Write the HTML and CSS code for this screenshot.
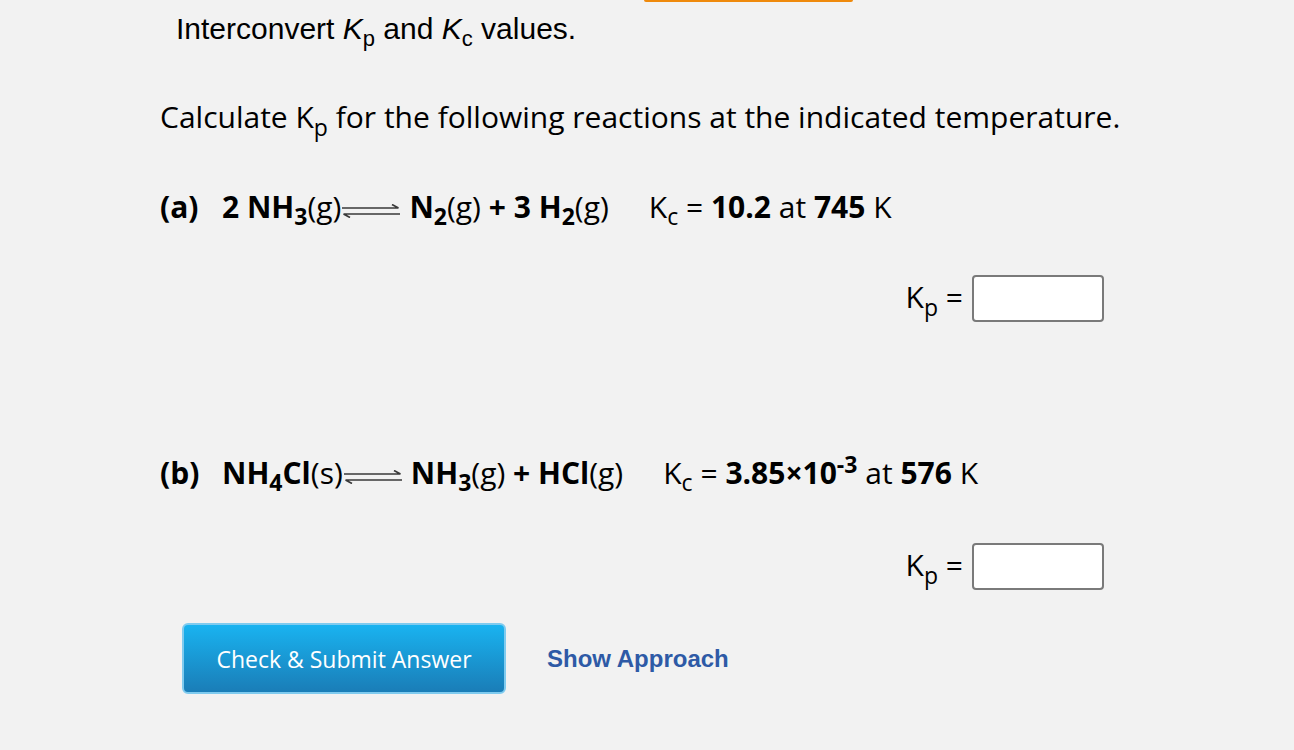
FILE: index.html
```html
<!DOCTYPE html>
<html>
<head>
<meta charset="utf-8">
<link rel="stylesheet" href="styles.css">
</head>
<body>
<div class="topbar"></div>
<div class="page">
  <h1 class="title">Interconvert <i>K</i><sub>p</sub> and <i>K</i><sub>c</sub> values.</h1>
  <p class="prompt">Calculate K<sub>p</sub> for the following reactions at the indicated temperature.</p>

  <div class="eq eqa">
    <span class="lbl">(a)</span>
    <span class="rx"><b>2 NH<sub>3</sub></b>(g)</span>
    <svg class="arrow" width="58" height="14" viewBox="0 0 58 14"><path d="M0 4H56.5M56.5 4L50 0.5" stroke="#3a3a3a" stroke-width="1.7" fill="none"/><path d="M1.5 10H58M1.5 10L8 13.5" stroke="#3a3a3a" stroke-width="1.7" fill="none"/></svg>
    <span class="rx"><b>N<sub>2</sub></b>(g) <b>+ 3 H<sub>2</sub></b>(g)</span>
    <span class="kc">K<sub>c</sub> = <b>10.2</b> at <b>745</b> K</span>
  </div>
  <div class="ans ansa"><span class="kp">K<sub>p</sub> =</span><input class="box" type="text"></div>

  <div class="eq eqb">
    <span class="lbl">(b)</span>
    <span class="rx"><b>NH<sub>4</sub>Cl</b>(s)</span>
    <svg class="arrow" width="58" height="14" viewBox="0 0 58 14"><path d="M0 4H56.5M56.5 4L50 0.5" stroke="#3a3a3a" stroke-width="1.7" fill="none"/><path d="M1.5 10H58M1.5 10L8 13.5" stroke="#3a3a3a" stroke-width="1.7" fill="none"/></svg>
    <span class="rx"><b>NH<sub>3</sub></b>(g) <b>+ HCl</b>(g)</span>
    <span class="kc">K<sub>c</sub> = <b>3.85×10<sup>-3</sup></b> at <b>576</b> K</span>
  </div>
  <div class="ans ansb"><span class="kp">K<sub>p</sub> =</span><input class="box" type="text"></div>

  <div class="actions">
    <button class="submit">Check &amp; Submit Answer</button>
    <a class="approach">Show Approach</a>
  </div>
</div>
</body>
</html>
```

FILE: styles.css
```css
html, body {
  margin: 0;
  padding: 0;
  background: #f2f2f2;
  color: #000;
}
.topbar {
  position: absolute;
  left: 644px;
  top: 0;
  width: 209px;
  height: 2px;
  background: #ef8a0c;
  border-radius: 0 0 2px 2px;
}
.page {
  width: 944px;
  padding-left: 160px;
  display: flex;
  flex-direction: column;
}
.title {
  margin: 11px 0 0 16px;
  font-family: "Liberation Sans", Arial, sans-serif;
  font-weight: normal;
  font-size: 30px;
  line-height: 36px;
  height: 36px;
  white-space: nowrap;
}
.title sub {
  font-size: 22px;
  vertical-align: -7px;
  line-height: 0;
}
.prompt {
  margin: 50px 0 0 0;
  font-family: "Open Sans", sans-serif;
  font-size: 30px;
  line-height: 40px;
  height: 40px;
  white-space: nowrap;
}
.prompt sub, .kp sub {
  font-size: 23px;
  vertical-align: -8px;
  line-height: 0;
}
.eq {
  display: flex;
  align-items: baseline;
  height: 40px;
  line-height: 40px;
  white-space: pre;
  font-family: "Open Sans", sans-serif;
  font-size: 30px;
}
.eq sub {
  font-size: 23px;
  vertical-align: -7px;
  line-height: 0;
}
.eqa { margin-top: 50px; }
.eqb { margin-top: 131px; }
.eq b { font-weight: bold; }
.lbl {
  font-weight: bold;
  width: 62px;
}
.arrow {
  margin: 0 9px 7px 1px;
  flex: none;
}
.kc {
  margin-left: 40px;
}
.kc sup {
  font-size: 23px;
  vertical-align: 11px;
  line-height: 0;
}
.ans {
  display: flex;
  justify-content: flex-end;
  align-items: center;
  gap: 9px;
  height: 47px;
}
.ansa { margin-top: 48px; }
.ansb { margin-top: 50px; }
.kp {
  font-family: "Open Sans", sans-serif;
  font-size: 30px;
  line-height: 40px;
  margin-top: -4px;
}
.box {
  width: 128px;
  height: 43px;
  box-sizing: content-box;
  padding: 0;
  margin: 0;
  border: 2px solid #7a7a7a;
  border-radius: 4px;
  background: #fff;
}
.actions {
  margin-top: 33px;
  display: flex;
  align-items: center;
  gap: 41px;
  margin-left: 22px;
}
.submit {
  width: 324px;
  height: 71px;
  border: 2px solid #7fcbef;
  border-radius: 6px;
  background: linear-gradient(#19b3f0, #1a7db7);
  color: #fff;
  font-family: "Open Sans", sans-serif;
  font-size: 23px;
  padding: 0;
}
.approach {
  font-family: "Liberation Sans", Arial, sans-serif;
  font-weight: bold;
  font-size: 24px;
  color: #2e5aa6;
}
```
